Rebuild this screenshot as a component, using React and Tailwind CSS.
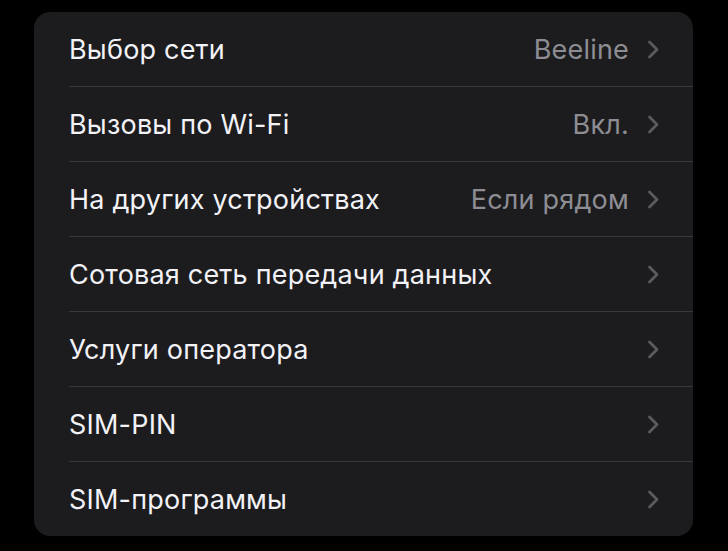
const rows = [
  { label: "Выбор сети", value: "Beeline" },
  { label: "Вызовы по Wi-Fi", value: "Вкл." },
  { label: "На других устройствах", value: "Если рядом" },
  { label: "Сотовая сеть передачи данных" },
  { label: "Услуги оператора" },
  { label: "SIM-PIN" },
  { label: "SIM-программы" },
];

function Chevron() {
  return (
    <svg width="13" height="19" viewBox="0 0 13 19" fill="none" className="shrink-0">
      <path
        d="M2.5 2 L10 9.5 L2.5 17"
        stroke="#5b5b5f"
        strokeWidth="2.8"
        strokeLinecap="round"
        strokeLinejoin="round"
      />
    </svg>
  );
}

export default function App() {
  return (
    <div
      className="w-[728px] h-[551px] bg-black pt-3 pl-[34px]"
      style={{ fontFamily: "Inter, 'Noto Sans', sans-serif" }}>
      <div className="w-[659px] rounded-2xl bg-[#1c1c1e] overflow-hidden">
        {rows.map((r, i) => (
          <div key={r.label} className="pl-[35px]">
            <div
              className={
                "flex items-center pr-[33px] " +
                (i > 0 ? "h-[75px] border-t border-[#38383a]" : "h-[74px]")
              }>
              <span className="flex-1 pt-[2px] text-[27px] text-[#f2f2f7] tracking-[0.2px]">
                {r.label}
              </span>
              {r.value && (
                <span className="pt-[2px] text-[27px] text-[#8d8d93] mr-[18px] tracking-[0.2px]">
                  {r.value}
                </span>
              )}
              <Chevron />
            </div>
          </div>
        ))}
      </div>
    </div>
  );
}
